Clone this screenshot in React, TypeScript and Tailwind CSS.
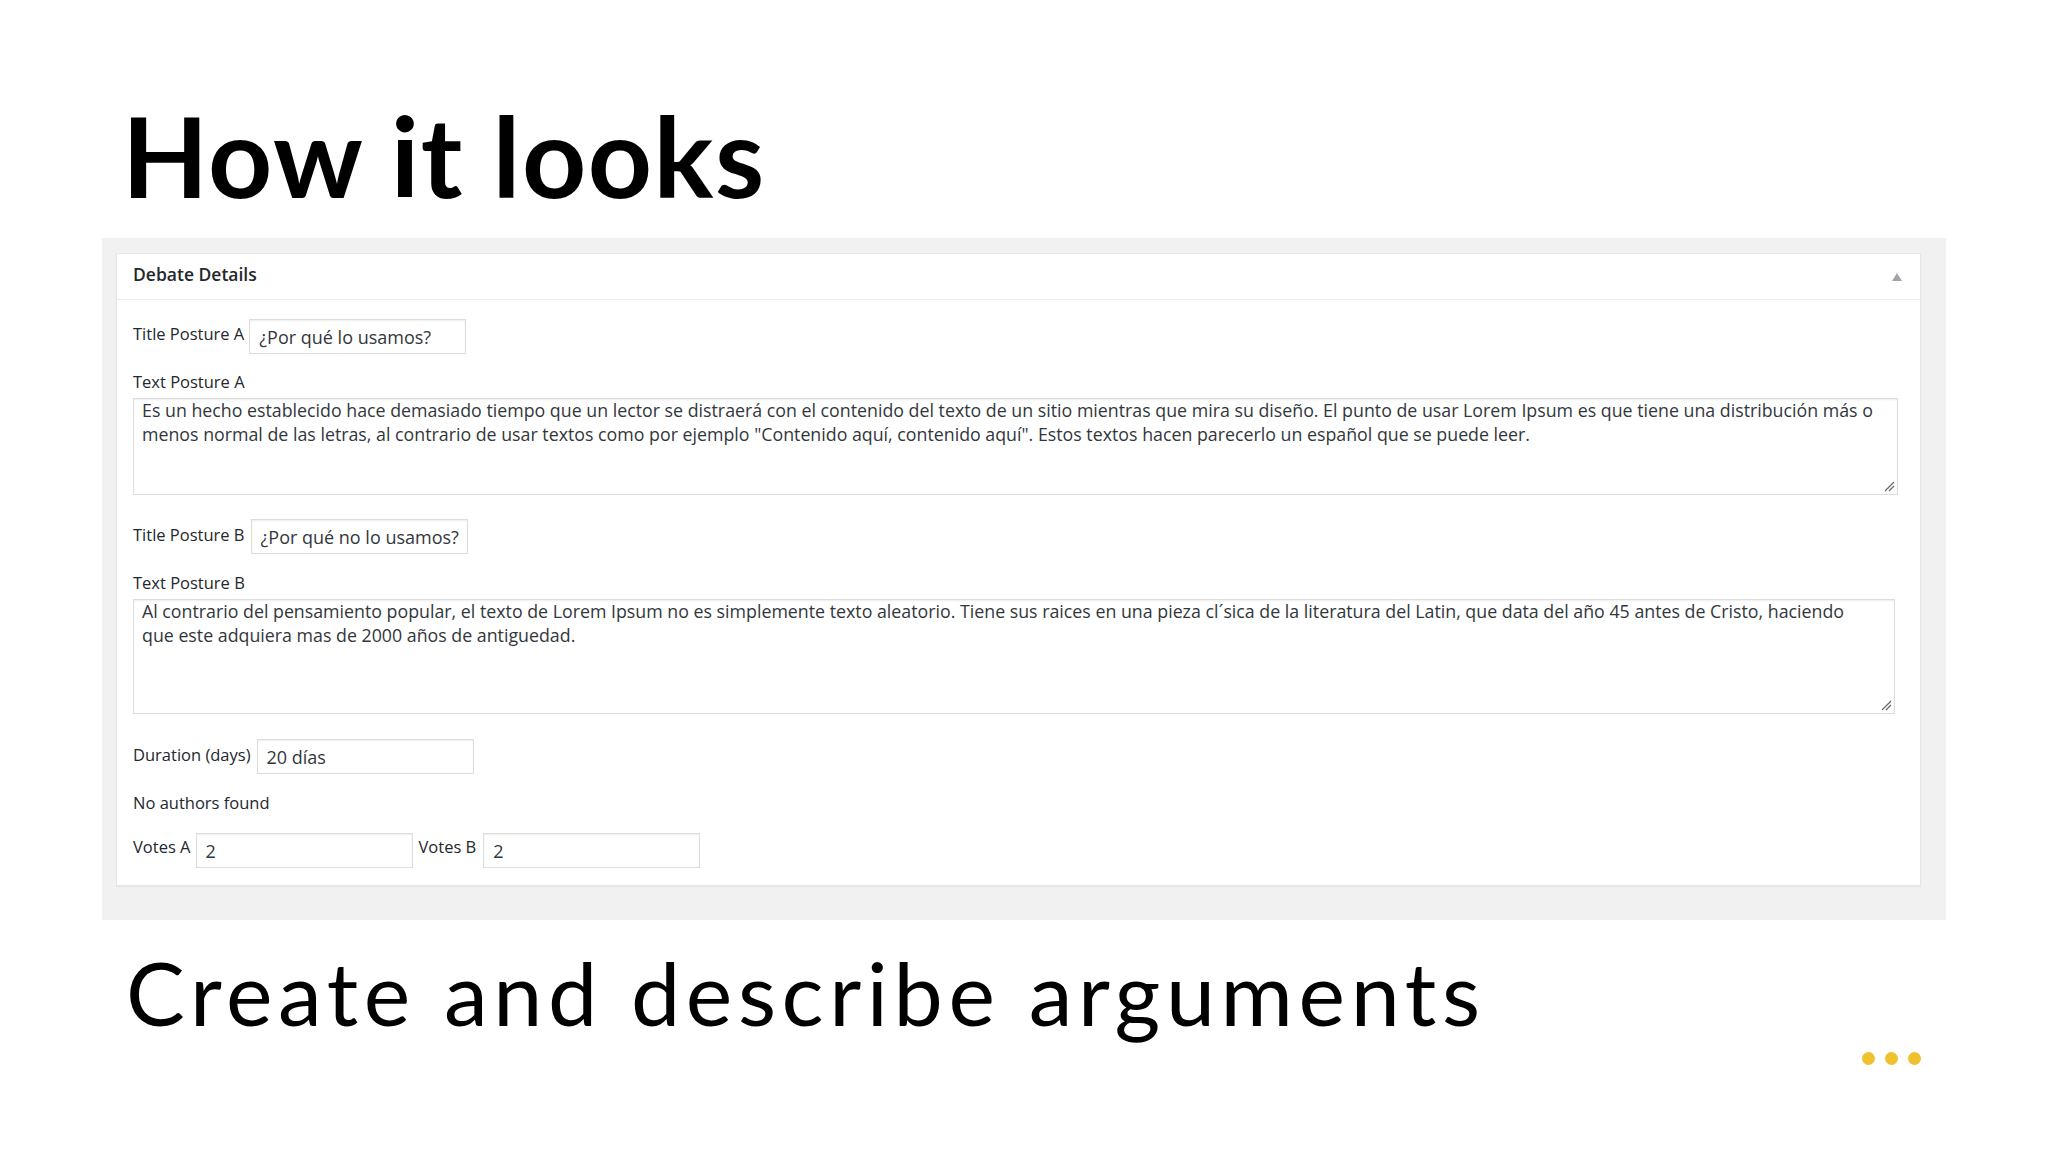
import React from "react";

const textA = [
  "Es un hecho establecido hace demasiado tiempo que un lector se distraerá con el contenido del texto de un sitio mientras que mira su diseño. El punto de usar Lorem Ipsum es que tiene una distribución más o",
  "menos normal de las letras, al contrario de usar textos como por ejemplo \"Contenido aquí, contenido aquí\". Estos textos hacen parecerlo un español que se puede leer.",
];

const textB = [
  "Al contrario del pensamiento popular, el texto de Lorem Ipsum no es simplemente texto aleatorio. Tiene sus raices en una pieza cl´sica de la literatura del Latin, que data del año 45 antes de Cristo, haciendo",
  "que este adquiera mas de 2000 años de antiguedad.",
];

const wpFont = { fontFamily: '"Open Sans", "Noto Sans", sans-serif' };

function Field({ value }: { value: string }) {
  return (
    <div className="w-[217px] h-[35px] border border-[#dddddd] bg-white shadow-[inset_0_1px_2px_rgba(0,0,0,0.07)] pl-[9px] flex items-center text-[18px] text-[#32373c]">
      {value}
    </div>
  );
}

function TextBox({ lines, height }: { lines: string[]; height: string }) {
  return (
    <div
      className={`relative border border-[#dddddd] bg-white shadow-[inset_0_1px_2px_rgba(0,0,0,0.07)] px-[8px] text-[17.8px] leading-[23.5px] text-[#32373c] ${height}`}
    >
      {lines.map((line, i) => (
        <div key={i} className="whitespace-nowrap">
          {line}
        </div>
      ))}
      {/* resize grip */}
      <svg
        className="absolute right-[2px] bottom-[2px]"
        width="12"
        height="12"
        viewBox="0 0 12 12"
      >
        <path d="M11 2 L2 11 M11 6 L6 11" stroke="#666" strokeWidth="1.2" />
      </svg>
    </div>
  );
}

export default function App() {
  return (
    <div className="w-[2048px] h-[1152px] bg-white overflow-hidden">
      <h1
        className="pl-[122px] pt-[99px] text-[112px] font-bold leading-none tracking-[1.5px] text-black"
        style={{ fontFamily: "Lato, sans-serif" }}
      >
        How it looks
      </h1>

      <div className="ml-[102px] mt-[27px] w-[1844px] bg-[#f1f1f1] pt-[15px] pl-[14px] pr-[25px] pb-[34px]">
        <div
          className="bg-white border border-[#e5e5e5] shadow-[0_1px_1px_rgba(0,0,0,0.04)] text-[#23282d]"
          style={wpFont}
        >
          {/* Header */}
          <div className="h-[46px] border-b border-[#eeeeee] flex items-center justify-between pl-[16px] pr-[18px]">
            <span className="text-[17.5px] font-semibold pb-[5px]">Debate Details</span>
            <svg width="10" height="8" viewBox="0 0 10 8">
              <path d="M5 0 L10 8 L0 8 Z" fill="#a0a5aa" />
            </svg>
          </div>

          {/* Body */}
          <div className="pl-[16px] pr-[22px] pt-[19px] pb-[17px] text-[16.5px] leading-[20px]">
            <div className="flex items-start">
              <span className="pt-[5px] mr-[5px]">Title Posture A</span>
              <Field value="¿Por qué lo usamos?" />
            </div>

            <div className="mt-[18px]">Text Posture A</div>
            <div className="mt-[6px]">
              <TextBox lines={textA} height="h-[97px]" />
            </div>

            <div className="flex items-start mt-[24px]">
              <span className="pt-[6px] mr-[6px]">Title Posture B</span>
              <Field value="¿Por qué no lo usamos?" />
            </div>

            <div className="mt-[19px]">Text Posture B</div>
            <div className="mt-[6px] pr-[3px]">
              <TextBox lines={textB} height="h-[115px]" />
            </div>

            <div className="flex items-start mt-[25px]">
              <span className="pt-[6px] mr-[6px]">Duration (days)</span>
              <Field value="20 días" />
            </div>

            <div className="mt-[19px]">No authors found</div>

            <div className="flex items-start mt-[20px]">
              <span className="pt-[4px] mr-[5px]">Votes A</span>
              <Field value="2" />
              <span className="pt-[4px] ml-[6px] mr-[7px]">Votes B</span>
              <Field value="2" />
            </div>
          </div>
        </div>
      </div>

      <h2
        className="pl-[126px] mt-[28px] text-[88px] leading-none font-normal tracking-[5.6px] text-black"
        style={{ fontFamily: "Lato, sans-serif" }}
      >
        Create and describe arguments
      </h2>

      <div className="flex justify-end pr-[127px] mt-[16px] gap-[10px]">
        <span className="w-[13px] h-[13px] rounded-full bg-[#efc12f]" />
        <span className="w-[13px] h-[13px] rounded-full bg-[#efc12f]" />
        <span className="w-[13px] h-[13px] rounded-full bg-[#efc12f]" />
      </div>
    </div>
  );
}
